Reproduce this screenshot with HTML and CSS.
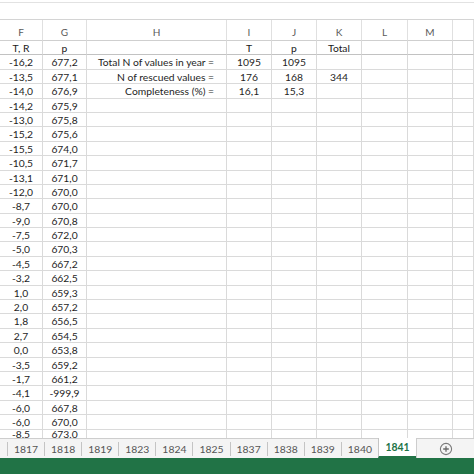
FILE: index.html
```html
<!DOCTYPE html>
<html>
<head>
<meta charset="utf-8">
<link rel="stylesheet" href="styles.css">
</head>
<body>
<div class="app">
  <div class="topstrip"><div class="fbar"></div></div>
  <div class="sheet">
    <div class="row hdr"><span>F</span><span>G</span><span>H</span><span>I</span><span>J</span><span>K</span><span>L</span><span>M</span><span></span></div>
    <div class="row lab"><span>T, R</span><span>p</span><span></span><span>T</span><span>p</span><span>Total</span><span></span><span></span><span></span></div>
    <div class="row"><span>-16,2</span><span>677,2</span><span class="rt">Total N of values in year =</span><span>1095</span><span>1095</span><span></span><span></span><span></span><span></span></div>
    <div class="row"><span>-13,5</span><span>677,1</span><span class="rt">N of rescued values =</span><span>176</span><span>168</span><span>344</span><span></span><span></span><span></span></div>
    <div class="row"><span>-14,0</span><span>676,9</span><span class="rt">Completeness (%) =</span><span>16,1</span><span>15,3</span><span></span><span></span><span></span><span></span></div>
    <div class="row"><span>-14,2</span><span>675,9</span><span></span><span></span><span></span><span></span><span></span><span></span><span></span></div>
    <div class="row"><span>-13,0</span><span>675,8</span><span></span><span></span><span></span><span></span><span></span><span></span><span></span></div>
    <div class="row"><span>-15,2</span><span>675,6</span><span></span><span></span><span></span><span></span><span></span><span></span><span></span></div>
    <div class="row"><span>-15,5</span><span>674,0</span><span></span><span></span><span></span><span></span><span></span><span></span><span></span></div>
    <div class="row"><span>-10,5</span><span>671,7</span><span></span><span></span><span></span><span></span><span></span><span></span><span></span></div>
    <div class="row"><span>-13,1</span><span>671,0</span><span></span><span></span><span></span><span></span><span></span><span></span><span></span></div>
    <div class="row"><span>-12,0</span><span>670,0</span><span></span><span></span><span></span><span></span><span></span><span></span><span></span></div>
    <div class="row"><span>-8,7</span><span>670,0</span><span></span><span></span><span></span><span></span><span></span><span></span><span></span></div>
    <div class="row"><span>-9,0</span><span>670,8</span><span></span><span></span><span></span><span></span><span></span><span></span><span></span></div>
    <div class="row"><span>-7,5</span><span>672,0</span><span></span><span></span><span></span><span></span><span></span><span></span><span></span></div>
    <div class="row"><span>-5,0</span><span>670,3</span><span></span><span></span><span></span><span></span><span></span><span></span><span></span></div>
    <div class="row"><span>-4,5</span><span>667,2</span><span></span><span></span><span></span><span></span><span></span><span></span><span></span></div>
    <div class="row"><span>-3,2</span><span>662,5</span><span></span><span></span><span></span><span></span><span></span><span></span><span></span></div>
    <div class="row"><span>1,0</span><span>659,3</span><span></span><span></span><span></span><span></span><span></span><span></span><span></span></div>
    <div class="row"><span>2,0</span><span>657,2</span><span></span><span></span><span></span><span></span><span></span><span></span><span></span></div>
    <div class="row"><span>1,8</span><span>656,5</span><span></span><span></span><span></span><span></span><span></span><span></span><span></span></div>
    <div class="row"><span>2,7</span><span>654,5</span><span></span><span></span><span></span><span></span><span></span><span></span><span></span></div>
    <div class="row"><span>0,0</span><span>653,8</span><span></span><span></span><span></span><span></span><span></span><span></span><span></span></div>
    <div class="row"><span>-3,5</span><span>659,2</span><span></span><span></span><span></span><span></span><span></span><span></span><span></span></div>
    <div class="row"><span>-1,7</span><span>661,2</span><span></span><span></span><span></span><span></span><span></span><span></span><span></span></div>
    <div class="row"><span>-4,1</span><span>-999,9</span><span></span><span></span><span></span><span></span><span></span><span></span><span></span></div>
    <div class="row"><span>-6,0</span><span>667,8</span><span></span><span></span><span></span><span></span><span></span><span></span><span></span></div>
    <div class="row"><span>-6,0</span><span>670,0</span><span></span><span></span><span></span><span></span><span></span><span></span><span></span></div>
    <div class="row last"><span>-8,5</span><span>673,0</span><span></span><span></span><span></span><span></span><span></span><span></span><span></span></div>
  </div>
  <div class="tabs">
    <div class="tab">1817</div>
    <div class="tab">1818</div>
    <div class="tab">1819</div>
    <div class="tab">1823</div>
    <div class="tab">1824</div>
    <div class="tab">1825</div>
    <div class="tab">1837</div>
    <div class="tab">1838</div>
    <div class="tab">1839</div>
    <div class="tab">1840</div>
    <div class="tab active">1841</div>
    <div class="addarea">
      <svg class="plus" width="14" height="14" viewBox="0 0 14 14"><circle cx="7" cy="7" r="5.6" fill="none" stroke="#7a7a7a" stroke-width="1.1"/><path d="M7 4.2v5.6M4.2 7h5.6" stroke="#6a6a6a" stroke-width="1.3"/></svg>
    </div>
  </div>
  <div class="status"></div>
</div>
</body>
</html>
```

FILE: styles.css
```css
html, body {
  margin: 0;
  padding: 0;
  background: #ffffff;
}
.app {
  width: 474px;
  height: 474px;
  overflow: hidden;
  display: flex;
  flex-direction: column;
  font-family: Lato, "Open Sans", "Liberation Sans", sans-serif;
  color: #1e1e1e;
}
.topstrip {
  height: 20px;
  box-sizing: border-box;
  padding-top: 2px;
  border-bottom: 1px solid #d4d4d4;
  flex: none;
}
.fbar {
  border-top: 1px solid #e2e2e2;
}
.sheet {
  height: 418px;
  overflow: hidden;
  flex: none;
}
.row {
  display: grid;
  grid-template-columns: 43px 44px 140px 45px 45px 45px 46px 45px 21px;
  height: 14.4px;
}
.row span {
  box-sizing: border-box;
  border-right: 1px solid #dadada;
  border-bottom: 1px solid #dadada;
  font-size: 10.3px;
  line-height: 14px;
  text-align: center;
  white-space: nowrap;
  overflow: hidden;
}
.row span.rt {
  text-align: right;
  padding-right: 12px;
}
.row.last span {
  line-height: 9px;
}
.row.hdr {
  height: 21px;
}
.row.hdr span {
  line-height: 21px;
  padding-top: 2px;
  font-size: 10px;
  color: #5a5a5a;
  border-bottom: 1px solid #cfcfcf;
  border-right-color: #e0e0e0;
}
.row.lab span {
  border-bottom: 1px solid #c2c2c2;
  color: #1a1a1a;
}
.tabs {
  height: 20px;
  box-sizing: border-box;
  flex: none;
  display: flex;
  align-items: center;
  background: #f4f4f4;
  border-top: 1px solid #cdcdcd;
  padding-left: 7px;
}
.tab {
  width: 37.1px;
  box-sizing: border-box;
  height: 14px;
  line-height: 14px;
  border-left: 1px solid #c4c4c4;
  text-align: center;
  font-size: 10.4px;
  color: #555555;
}
.tab.active {
  height: 20px;
  margin-top: -1px;
  align-self: flex-start;
  width: 38px;
  line-height: 18px;
  background: #ffffff;
  border-left: 1px solid #c4c4c4;
  border-bottom: 2px solid #217346;
  color: #217346;
  font-weight: 700;
}
.addarea {
  flex: 1;
  display: flex;
  justify-content: center;
  align-items: center;
  height: 100%;
  border-left: 1px solid #cdcdcd;
}
.plus {
  display: block;
  margin-left: 2px;
}
.status {
  height: 16px;
  flex: none;
  background: #217346;
}
```
